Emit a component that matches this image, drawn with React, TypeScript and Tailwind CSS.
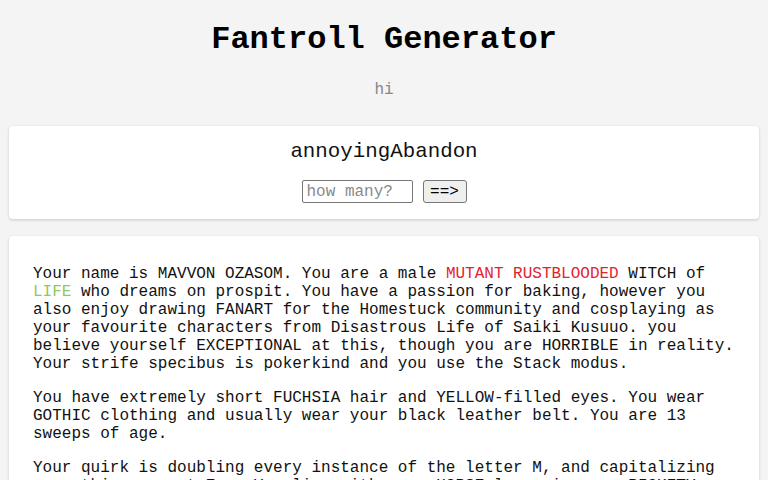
import { useState } from 'react';

// Fantroll generator page: title, name card with count input, and the rolled description
export default function App() {
  const [count, setCount] = useState('');

  return (
    <div className="min-h-screen bg-[#f4f4f4] px-[9px] font-['Liberation_Mono',monospace] text-[#111]">
      <h1 className="pt-[22px] text-center text-[32px] font-bold leading-[36px] text-black">
        Fantroll Generator
      </h1>
      <p className="mt-[23px] text-center text-[16px] leading-[18px] text-[#888]">hi</p>

      {/* name + how many */}
      <div className="mt-[27px] rounded-[4px] bg-white px-6 pb-4 pt-[14px] shadow-[0_1px_3px_rgba(0,0,0,0.18)]">
        <h2 className="text-center text-[20.8px] leading-[24px] text-[#111]">annoyingAbandon</h2>
        <div className="mt-4 flex items-center justify-center gap-[10px]">
          <input
            value={count}
            onChange={(e) => setCount(e.target.value)}
            placeholder="how many?"
            className="h-[23px] w-[111px] rounded-[2px] border border-[#767676] bg-white px-[4px] font-['Liberation_Mono',monospace] text-[16px] text-black outline-none placeholder:text-[#8a8a8a]"
          />
          <button className="h-[23px] w-[44px] rounded-[3px] border border-[#767676] bg-[#efefef] font-['Liberation_Mono',monospace] text-[16px] leading-none text-black">
            ==&gt;
          </button>
        </div>
      </div>

      {/* generated troll */}
      <div className="mt-[17px] rounded-[4px] bg-white px-6 pb-6 pt-[29px] text-[16px] leading-[18px] shadow-[0_1px_3px_rgba(0,0,0,0.18)]">
        <p>
          Your name is MAVVON OZASOM. You are a male{' '}
          <span className="text-[#e3232f]">MUTANT RUSTBLOODED</span> WITCH of{' '}
          <span className="text-[#8fc95a]">LIFE</span> who dreams on prospit. You have a passion for baking,
          however you also enjoy drawing FANART for the Homestuck community and cosplaying as your favourite
          characters from Disastrous Life of Saiki Kusuuo. you believe yourself EXCEPTIONAL at this, though you
          are HORRIBLE in reality. Your strife specibus is pokerkind and you use the Stack modus.
        </p>
        <p className="mt-4">
          You have extremely short FUCHSIA hair and YELLOW-filled eyes. You wear GOTHIC clothing and usually
          wear your black leather belt. You are 13 sweeps of age.
        </p>
        <p className="mt-4">
          Your quirk is doubling every instance of the letter M, and capitalizing everything except Ems. You
          live with your HORSE lusus in your RICKETY hive on a cliff near the sea.
        </p>
      </div>
    </div>
  );
}
